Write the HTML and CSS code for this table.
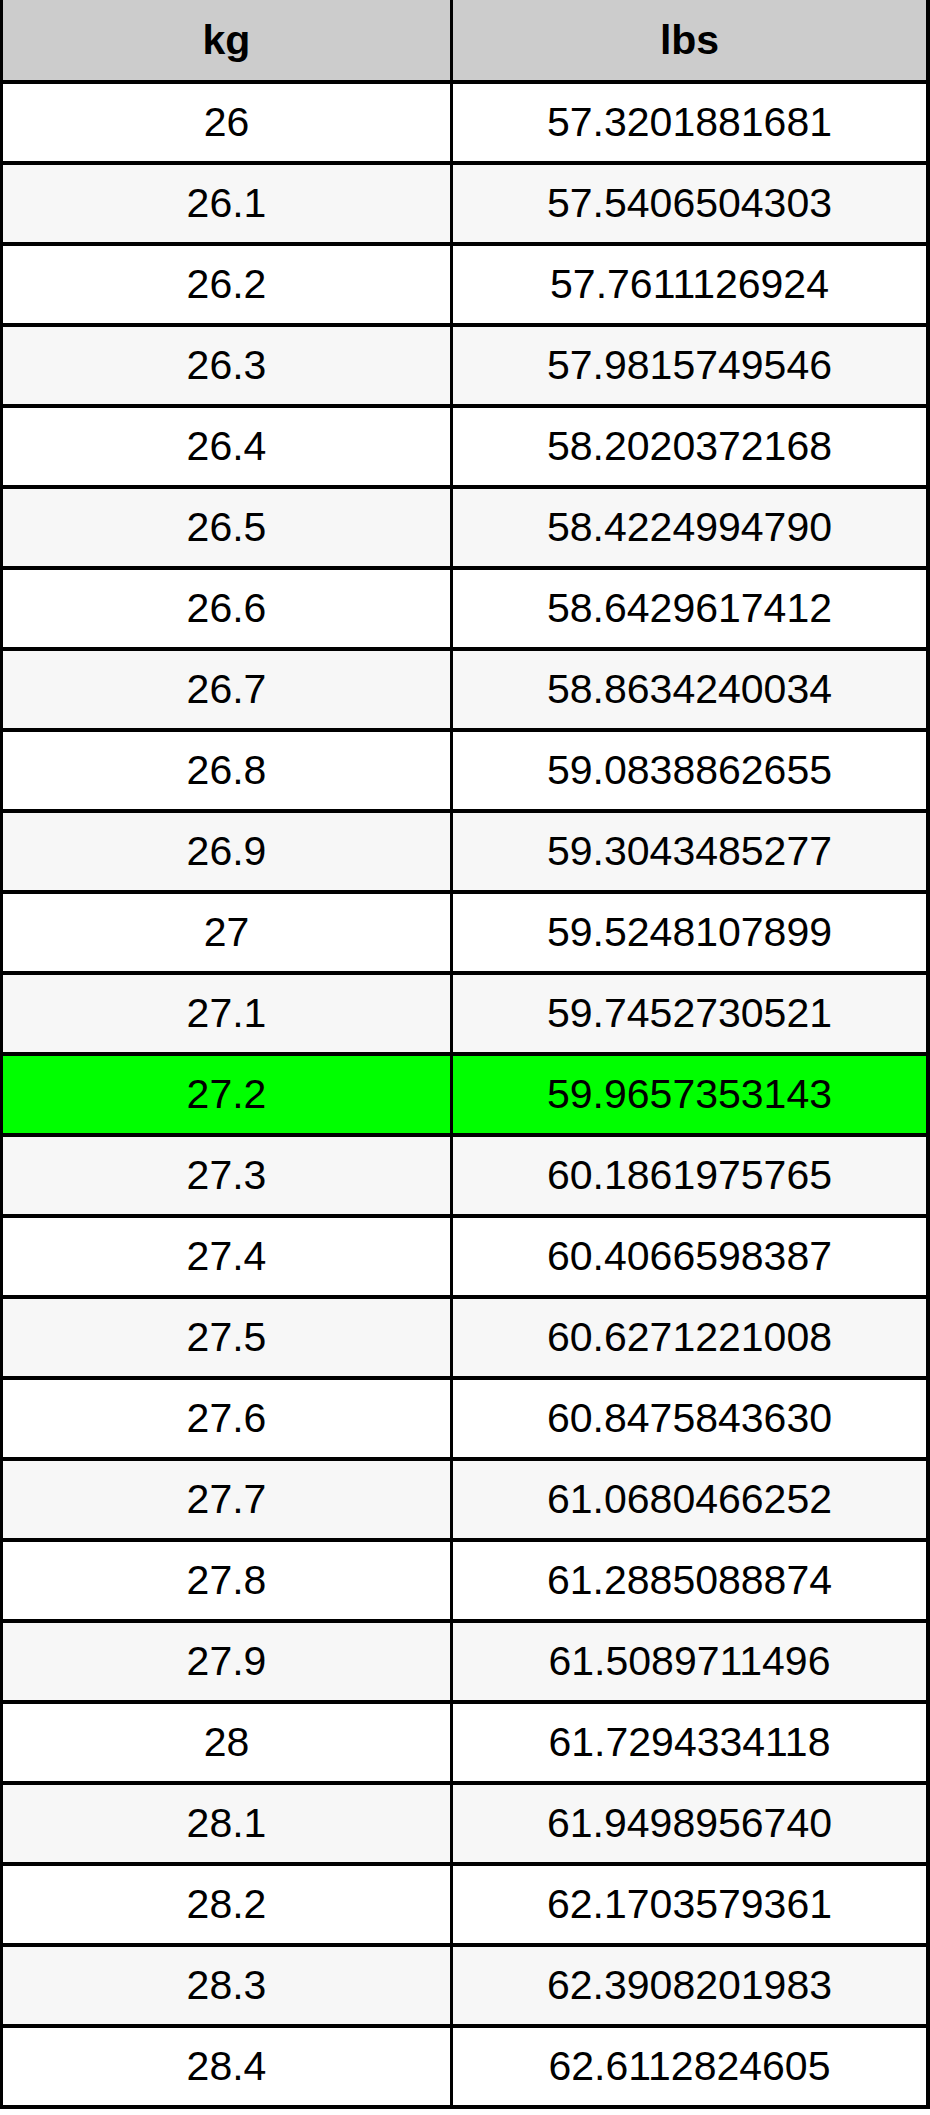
FILE: index.html
```html
<!DOCTYPE html>
<html>
<head>
<meta charset="utf-8">
<link rel="stylesheet" href="styles.css">
</head>
<body>
<div class="table">
  <div class="cell head left">kg</div><div class="cell head right">lbs</div>
  <div class="cell left">26</div><div class="cell right">57.3201881681</div>
  <div class="cell left alt">26.1</div><div class="cell right alt">57.5406504303</div>
  <div class="cell left">26.2</div><div class="cell right">57.7611126924</div>
  <div class="cell left alt">26.3</div><div class="cell right alt">57.9815749546</div>
  <div class="cell left">26.4</div><div class="cell right">58.2020372168</div>
  <div class="cell left alt">26.5</div><div class="cell right alt">58.4224994790</div>
  <div class="cell left">26.6</div><div class="cell right">58.6429617412</div>
  <div class="cell left alt">26.7</div><div class="cell right alt">58.8634240034</div>
  <div class="cell left">26.8</div><div class="cell right">59.0838862655</div>
  <div class="cell left alt">26.9</div><div class="cell right alt">59.3043485277</div>
  <div class="cell left">27</div><div class="cell right">59.5248107899</div>
  <div class="cell left alt">27.1</div><div class="cell right alt">59.7452730521</div>
  <div class="cell left hl">27.2</div><div class="cell right hl">59.9657353143</div>
  <div class="cell left alt">27.3</div><div class="cell right alt">60.1861975765</div>
  <div class="cell left">27.4</div><div class="cell right">60.4066598387</div>
  <div class="cell left alt">27.5</div><div class="cell right alt">60.6271221008</div>
  <div class="cell left">27.6</div><div class="cell right">60.8475843630</div>
  <div class="cell left alt">27.7</div><div class="cell right alt">61.0680466252</div>
  <div class="cell left">27.8</div><div class="cell right">61.2885088874</div>
  <div class="cell left alt">27.9</div><div class="cell right alt">61.5089711496</div>
  <div class="cell left">28</div><div class="cell right">61.7294334118</div>
  <div class="cell left alt">28.1</div><div class="cell right alt">61.9498956740</div>
  <div class="cell left">28.2</div><div class="cell right">62.1703579361</div>
  <div class="cell left alt">28.3</div><div class="cell right alt">62.3908201983</div>
  <div class="cell left">28.4</div><div class="cell right">62.6112824605</div>
</div>
</body>
</html>
```
FILE: styles.css
```css
html, body {
  margin: 0;
  padding: 0;
  background: #ffffff;
}
.table {
  width: 930px;
  display: grid;
  grid-template-columns: 453px 477px;
  font-family: "Liberation Sans", Arial, sans-serif;
  font-size: 41px;
  color: #000;
}
.cell {
  box-sizing: border-box;
  height: 81px;
  display: flex;
  align-items: center;
  justify-content: center;
  border-bottom: 4px solid #000;
  background: #ffffff;
  white-space: nowrap;
}
.left {
  border-left: 3px solid #000;
  border-right: 3px solid #000;
}
.right {
  border-right: 4px solid #000;
}
.head {
  height: 84px;
  background: #cccccc;
  font-weight: bold;
}
.alt {
  background: #f7f7f7;
}
.hl {
  background: #00ff00;
}
```
